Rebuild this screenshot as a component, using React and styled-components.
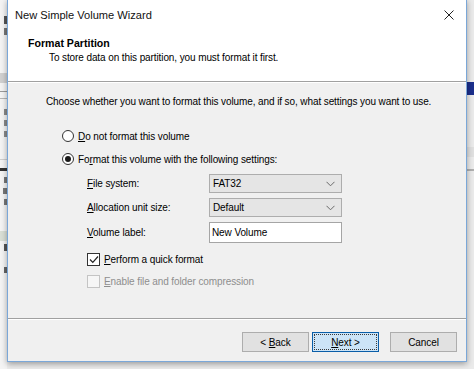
import React from 'react'
import styled, { createGlobalStyle } from 'styled-components'

const GlobalStyle = createGlobalStyle`
    html, body {
        margin: 0;
        padding: 0;
        overflow: hidden;
    }
    body {
        font-family: "Liberation Sans", Arial, sans-serif;
        background: #e9e9e9;
    }
`

const Desktop = styled.div`
    width: 474px;
    height: 369px;
    position: relative;
    overflow: hidden;
    display: flex;
    background: #ececec;
`

const BackLeft = styled.div`
    width: 7px;
    height: 100%;
    background: #f4f4f4;
    display: flex;
    flex-direction: column;
    align-items: flex-end;
    overflow: hidden;
`

const BackMark = styled.div`
    width: ${props => props.w || 7}px;
    height: ${props => props.h || 1}px;
    margin-top: ${props => props.top}px;
    background: ${props => props.color};
    flex-shrink: 0;
`

const BackRight = styled.div`
    position: absolute;
    right: 0;
    top: 0;
    width: 8px;
    height: 100%;
    background: #ebebeb;
    display: flex;
    flex-direction: column;
    align-items: flex-end;
`

const Window = styled.div`
    position: absolute;
    left: 7px;
    top: -1px;
    width: 458px;
    height: 362px;
    border: 1px solid #7aa7d8;
    border-top: none;
    background: #f0f0f0;
    box-shadow: 0 2px 6px rgba(0, 0, 0, 0.35);
    display: flex;
    flex-direction: column;
    font-size: 10px;
    letter-spacing: -0.1px;
    color: #000;
`

const TitleBar = styled.div`
    height: 30px;
    display: flex;
    align-items: center;
    justify-content: space-between;
    padding: 0 12px 0 7px;
    background: #fff;
`

const TitleText = styled.div`
    font-size: 11.1px;
    letter-spacing: 0;
    color: #111;
    margin-top: 1px;
`

const CloseIcon = styled.svg`
    width: 10px;
    height: 10px;
    margin-top: 1px;
`

const Header = styled.div`
    background: #fff;
    height: 53px;
    padding: 7px 0 0 20px;
    box-sizing: border-box;
    border-bottom: 1px solid #a0a0a0;
    box-shadow: 0 1px 0 #fff;
`

const HeaderTitle = styled.div`
    font-weight: 700;
    font-size: 10.6px;
    letter-spacing: 0;
    line-height: 14px;
`

const HeaderSub = styled.div`
    margin-left: 21px;
    line-height: 15px;
`

const Body = styled.div`
    flex: 1;
    padding: 13px 0 0 38px;
    display: flex;
    flex-direction: column;
`

const Intro = styled.div`
    line-height: 14px;
    margin-bottom: 20px;
`

const Options = styled.div`
    padding-left: 16px;
    display: flex;
    flex-direction: column;
    gap: 9px;
`

const OptionRow = styled.label`
    display: flex;
    align-items: center;
    gap: 4px;
    height: 14px;
    color: ${props => props.disabled ? '#8e8e8e' : '#000'};
`

const Radio = styled.span`
    width: 12px;
    height: 12px;
    box-sizing: border-box;
    border-radius: 50%;
    border: 1px solid #333;
    background: #fff;
    display: flex;
    align-items: center;
    justify-content: center;
    &::after {
        content: '';
        width: 6px;
        height: 6px;
        border-radius: 50%;
        background: ${props => props.checked ? '#1a1a1a' : 'transparent'};
    }
`

const Settings = styled.div`
    padding-left: 41px;
    margin-top: 8px;
    display: grid;
    grid-template-columns: 122px 133px;
    row-gap: 5px;
    align-items: center;
`

const FieldLabel = styled.div`
    line-height: 14px;
`

const Combo = styled.div`
    height: 19px;
    box-sizing: border-box;
    border: 1px solid #adadad;
    background: #e5e5e5;
    display: flex;
    align-items: center;
    justify-content: space-between;
    padding: 0 6px 0 3px;
`

const TextField = styled.div`
    height: 21px;
    box-sizing: border-box;
    border: 1px solid #a5a5a5;
    background: #fff;
    display: flex;
    align-items: center;
    padding: 0 2px;
`

const Checks = styled.div`
    padding-left: 41px;
    margin-top: 9px;
    display: flex;
    flex-direction: column;
    gap: 8px;
`

const CheckBox = styled.span`
    width: 13px;
    height: 13px;
    box-sizing: border-box;
    border: 1px solid ${props => props.disabled ? '#c4c4c4' : '#333'};
    background: ${props => props.disabled ? '#f6f6f6' : '#fff'};
    display: flex;
    align-items: center;
    justify-content: center;
`

const Footer = styled.div`
    height: 43px;
    border-top: 1px solid #a0a0a0;
    box-shadow: inset 0 1px 0 #fff;
    display: flex;
    justify-content: flex-end;
    align-items: flex-start;
    padding: 13px 9px 0 0;
    box-sizing: border-box;
    gap: 3px;
`

const Button = styled.div`
    width: 67px;
    height: 20px;
    box-sizing: border-box;
    border: 1px solid ${props => props.primary ? '#0a5ea8' : '#adadad'};
    background: ${props => props.primary ? '#cce4f7' : '#e1e1e1'};
    display: flex;
    align-items: center;
    justify-content: center;
    margin-left: ${props => props.gapLeft || 0}px;
    position: relative;
    &::after {
        content: '';
        display: ${props => props.primary ? 'block' : 'none'};
        position: absolute;
        inset: 1px;
        border: 1px dotted #3a3a3a;
    }
`

const Key = styled.span`
    text-decoration: underline;
    text-underline-offset: 1px;
`

const Chevron = () => (
    <svg width="9" height="6" viewBox="0 0 9 6">
        <path d="M0.5 0.8 L4.5 4.8 L8.5 0.8" fill="none" stroke="#6a6a6a" strokeWidth="1" />
    </svg>
)

const App = () => (
    <>
        <GlobalStyle />
        <Desktop>
            <BackLeft>
                <BackMark top={16} w={3} h={8} color="#555" />
                <BackMark top={4} w={3} h={7} color="#777" />
                <BackMark top={38} h={10} color="#d0d0d0" />
                <BackMark top={8} color="#9a9a9a" />
                <BackMark top={6} color="#b5b5b5" />
                <BackMark top={10} w={3} h={6} color="#8a8a8a" />
                <BackMark top={5} w={3} h={6} color="#8a8a8a" />
                <BackMark top={5} w={3} h={6} color="#8a8a8a" />
                <BackMark top={22} color="#cfcfcf" />
                <BackMark top={8} h={3} color="#333" />
                <BackMark top={6} w={3} h={6} color="#777" />
                <BackMark top={5} w={4} h={6} color="#777" />
                <BackMark top={5} w={3} h={6} color="#777" />
                <BackMark top={26} h={10} color="#d9dfd6" />
                <BackMark top={3} w={3} h={7} color="#555" />
                <BackMark top={16} w={3} h={6} color="#666" />
            </BackLeft>
            <BackRight>
                <BackMark top={82} w={8} h={13} color="#1b2f8c" />
                <BackMark top={52} w={8} h={10} color="#e0e0e0" />
                <BackMark top={12} w={8} h={2} color="#b0b0b0" />
            </BackRight>
            <Window>
                <TitleBar>
                    <TitleText>New Simple Volume Wizard</TitleText>
                    <CloseIcon viewBox="0 0 10 10">
                        <path d="M0.5 0.5 L9.5 9.5 M9.5 0.5 L0.5 9.5" stroke="#222" strokeWidth="1" />
                    </CloseIcon>
                </TitleBar>
                <Header>
                    <HeaderTitle>Format Partition</HeaderTitle>
                    <HeaderSub>To store data on this partition, you must format it first.</HeaderSub>
                </Header>
                <Body>
                    <Intro>Choose whether you want to format this volume, and if so, what settings you want to use.</Intro>
                    <Options>
                        <OptionRow>
                            <Radio />
                            <span><Key>D</Key>o not format this volume</span>
                        </OptionRow>
                        <OptionRow>
                            <Radio checked />
                            <span>Fo<Key>r</Key>mat this volume with the following settings:</span>
                        </OptionRow>
                    </Options>
                    <Settings>
                        <FieldLabel><Key>F</Key>ile system:</FieldLabel>
                        <Combo>FAT32<Chevron /></Combo>
                        <FieldLabel><Key>A</Key>llocation unit size:</FieldLabel>
                        <Combo>Default<Chevron /></Combo>
                        <FieldLabel><Key>V</Key>olume label:</FieldLabel>
                        <TextField>New Volume</TextField>
                    </Settings>
                    <Checks>
                        <OptionRow>
                            <CheckBox>
                                <svg width="10" height="9" viewBox="0 0 10 9">
                                    <path d="M1 4.5 L3.8 7.3 L9 1.5" fill="none" stroke="#222" strokeWidth="1.2" />
                                </svg>
                            </CheckBox>
                            <span><Key>P</Key>erform a quick format</span>
                        </OptionRow>
                        <OptionRow disabled>
                            <CheckBox disabled />
                            <span><Key>E</Key>nable file and folder compression</span>
                        </OptionRow>
                    </Checks>
                </Body>
                <Footer>
                    <Button><span>&lt; <Key>B</Key>ack</span></Button>
                    <Button primary><span><Key>N</Key>ext &gt;</span></Button>
                    <Button gapLeft={8}>Cancel</Button>
                </Footer>
            </Window>
        </Desktop>
    </>
)

export default App
